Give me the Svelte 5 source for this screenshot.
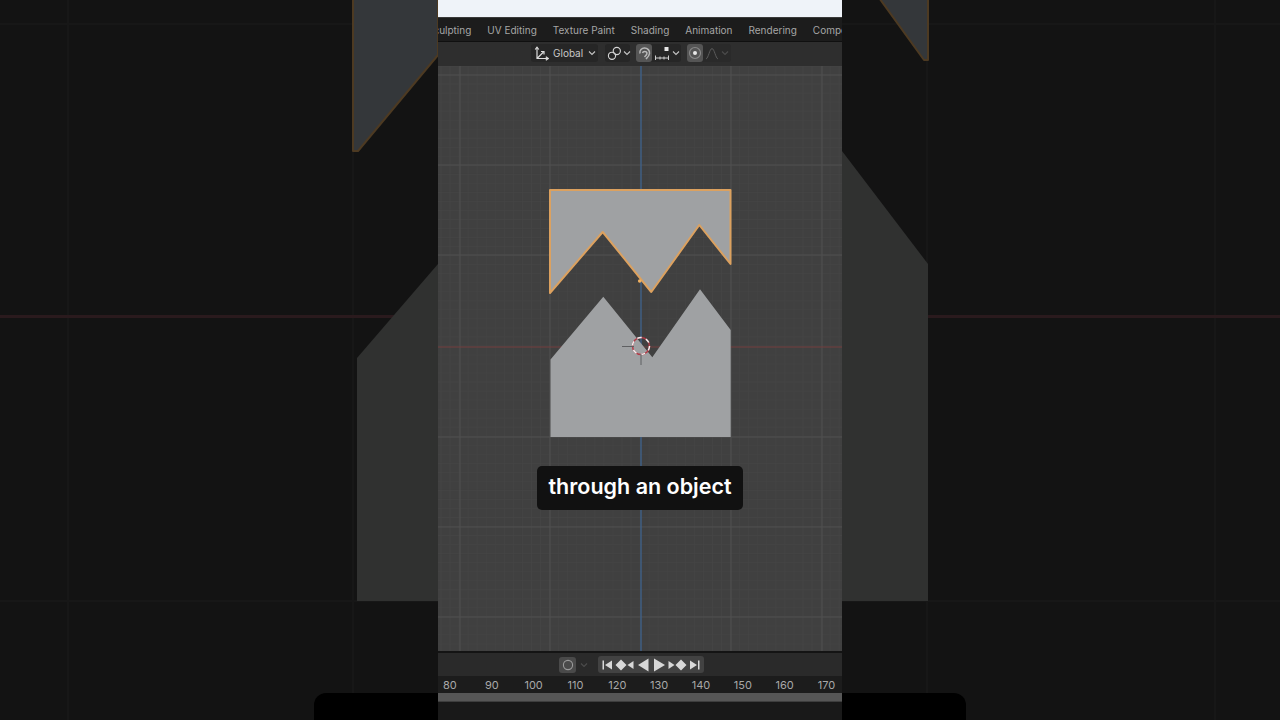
<script lang="ts">
	const tabs = ['Sculpting', 'UV Editing', 'Texture Paint', 'Shading', 'Animation', 'Rendering', 'Compositing'];
	const frames = [80, 90, 100, 110, 120, 130, 140, 150, 160, 170];

	const majorX = [460, 550, 731, 822];
	const majorY = [75, 165, 255, 437, 527, 617];
	const minorX = Array.from({ length: 46 }, (_, i) => 441 + i * 9.05);
	const minorY = Array.from({ length: 66 }, (_, i) => 66 + i * 9.03);
</script>

<div class="stage">
	<svg class="backdrop" viewBox="0 0 1280 720" aria-hidden="true">
		<g class="back-grid">
			<line x1="68" y1="0" x2="68" y2="720" />
			<line x1="353" y1="0" x2="353" y2="720" />
			<line x1="927" y1="0" x2="927" y2="720" />
			<line x1="1215" y1="0" x2="1215" y2="720" />
			<line x1="0" y1="24" x2="1280" y2="24" />
			<line x1="0" y1="601" x2="1280" y2="601" />
		</g>
		<line class="back-axis" x1="0" y1="316.5" x2="400" y2="316.5" />
		<line class="back-axis" x1="928" y1="316.5" x2="1280" y2="316.5" />
		<polygon class="back-top" points="353,-5 438,-5 438,55 358,151 353,151" />
		<polygon class="back-top" points="877,-5 928,-5 928,60 924,60" />
		<polygon class="back-low" points="357,358 438,264 438,601 357,601" />
		<polygon class="back-low" points="842,151 928,264 928,601 842,601" />
		<rect x="314" y="693" width="652" height="60" rx="12" fill="#000" />
	</svg>

	<main class="screen">
		<div class="strip"></div>

		<nav class="tabs">
			{#each tabs as tab}
				<span>{tab}</span>
			{/each}
		</nav>

		<div class="tool-header">
			<div class="group orient">
				<svg width="15" height="15" viewBox="0 0 15 15" fill="none" stroke="#dcdcdc" stroke-width="1.2">
					<path d="M3 1.5V12.5H14M3 12.5L9.5 6" />
					<path d="M1.2 3.5L3 1.2L4.8 3.5M11.8 10.7L14.2 12.5L11.8 14.3M7 5.5L10 5.5L10 8.5" />
				</svg>
				<span class="label">Global</span>
				<svg class="chev" width="8" height="6" viewBox="0 0 8 6"><path d="M1 1.5L4 4.5L7 1.5" /></svg>
			</div>
			<div class="group pivot">
				<svg width="15" height="15" viewBox="0 0 15 15" fill="none" stroke="#d6d6d6" stroke-width="1.1">
					<circle cx="5" cy="9.8" r="3.6" />
					<circle cx="9.8" cy="5" r="3.6" />
				</svg>
				<svg class="chev" width="8" height="6" viewBox="0 0 8 6"><path d="M1 1.5L4 4.5L7 1.5" /></svg>
			</div>
			<div class="group snap">
				<span class="active-btn">
					<svg width="13" height="13" viewBox="0 0 13 13" fill="none" stroke="#b9b9b9" stroke-width="1.5">
						<path d="M2 6.5C1.2 3 4 1 6.5 1C9.5 1 12 3.5 11.5 6.5C11.2 9 9.5 10.5 8 12" />
						<path d="M4.5 6C5 4 8.5 3.8 9 6C9.2 7.5 8 8.5 6.5 10" />
					</svg>
				</span>
				<svg width="16" height="15" viewBox="0 0 16 15" fill="none" stroke="#cfcfcf" stroke-width="1">
					<path d="M1.5 9.5V14M6 10.5V13.5M10 10.5V13.5M14.5 9.5V14M1.5 12H14.5" />
					<rect x="10.5" y="1" width="4" height="4" fill="#e8e8e8" stroke="none" />
				</svg>
				<svg class="chev" width="8" height="6" viewBox="0 0 8 6"><path d="M1 1.5L4 4.5L7 1.5" /></svg>
			</div>
			<div class="group prop">
				<span class="active-btn">
					<svg width="14" height="14" viewBox="0 0 14 14" fill="none">
						<circle cx="7" cy="7" r="5.5" stroke="#8a8a8a" stroke-width="1.2" />
						<circle cx="7" cy="7" r="2" fill="#e8e8e8" />
					</svg>
				</span>
				<svg width="14" height="13" viewBox="0 0 14 13" fill="none" stroke="#5c5c5c" stroke-width="1">
					<path d="M1 12C3.5 11 4.5 2 7 1.5C9.5 2 10.5 11 13 12" />
				</svg>
				<svg class="chev dim" width="8" height="6" viewBox="0 0 8 6"><path d="M1 1.5L4 4.5L7 1.5" /></svg>
			</div>
		</div>

		<svg class="viewport" viewBox="438 66 404 585" aria-hidden="true">
			<g class="minor">
				{#each minorX as x}
					<line x1={x} y1="66" x2={x} y2="651" />
				{/each}
				{#each minorY as y}
					<line x1="438" y1={y} x2="842" y2={y} />
				{/each}
			</g>
			<g class="major">
				{#each majorX as x}
					<line x1={x} y1="66" x2={x} y2="651" />
				{/each}
				{#each majorY as y}
					<line x1="438" y1={y} x2="842" y2={y} />
				{/each}
			</g>
			<line class="axis-x" x1="438" y1="347" x2="842" y2="347" />
			<line class="axis-y" x1="641" y1="66" x2="641" y2="651" />

			<polygon class="low-shape" points="550.5,359.5 603.3,296.7 652.3,357.3 700,289.3 730.7,330 730.7,437 550.5,437" />
			<polygon class="top-shape" points="550,190 730.5,190 730.5,264 699.3,225 651.3,292 602.7,232 550,293" />
			<circle cx="639.7" cy="281" r="1.8" fill="#f0b060" />

			<g class="cursor">
				<circle class="ring-red" cx="641" cy="346" r="8.5" />
				<circle class="ring-white" cx="641" cy="346" r="8.5" />
				<path d="M622 346.5H634M641 354V365" />
			</g>
		</svg>

		<div class="timeline">
			<div class="rec">
				<svg width="12" height="12" viewBox="0 0 12 12" fill="none">
					<circle cx="6" cy="6" r="4.6" stroke="#9a9a9a" stroke-width="1.1" />
				</svg>
			</div>
			<svg class="chev dim rec-chev" width="8" height="6" viewBox="0 0 8 6"><path d="M1 1.5L4 4.5L7 1.5" /></svg>
			<div class="transport">
				<svg width="16" height="14" viewBox="0 0 16 14"><path d="M3.5 2.5H5V11.5H3.5ZM13 2.5V11.5L6 7Z" /></svg>
				<svg width="20" height="14" viewBox="0 0 20 14"><path d="M6 1.5L11.5 7L6 12.5L0.5 7ZM18.5 3V11L12.5 7Z" /></svg>
				<svg width="16" height="14" viewBox="0 0 16 14"><path d="M13.5 0.5V13.5L3 7Z" /></svg>
				<svg width="16" height="14" viewBox="0 0 16 14"><path d="M3 0.5V13.5L14 7Z" /></svg>
				<svg width="20" height="14" viewBox="0 0 20 14"><path d="M1.5 3V11L7.5 7ZM14 1.5L19.5 7L14 12.5L8.5 7Z" /></svg>
				<svg width="16" height="14" viewBox="0 0 16 14"><path d="M3 2.5V11.5L10 7ZM11 2.5H12.5V11.5H11Z" /></svg>
			</div>
		</div>

		<div class="ruler">
			{#each frames as frame}
				<span>{frame}</span>
			{/each}
		</div>
		<div class="scrub"></div>
		<div class="footer"></div>

		<div class="caption">through an object</div>
	</main>
</div>

<style>
	:global(body) {
		margin: 0;
		background: #131313;
	}

	.stage {
		position: relative;
		width: 1280px;
		height: 720px;
		display: flex;
		justify-content: center;
		overflow: hidden;
		background: #131313;
		font-family: Inter, "Liberation Sans", sans-serif;
	}

	.backdrop {
		position: absolute;
		inset: 0;
		width: 1280px;
		height: 720px;
	}

	.back-grid line {
		stroke: #171717;
		stroke-width: 2;
	}

	.back-axis {
		stroke: #2a1a1d;
		stroke-width: 3;
	}

	.back-top {
		fill: #34373a;
		stroke: #4d3a22;
		stroke-width: 2;
		stroke-linejoin: round;
	}

	.back-low {
		fill: #303130;
	}

	.screen {
		position: relative;
		width: 404px;
		height: 720px;
		display: flex;
		flex-direction: column;
		overflow: hidden;
		background: #181818;
	}

	.strip {
		height: 17px;
		flex-shrink: 0;
		background: #eff3f9;
		border-bottom: 1px solid #3a3a3a;
	}

	.tabs {
		height: 24px;
		box-sizing: border-box;
		flex-shrink: 0;
		display: flex;
		align-items: center;
		gap: 16px;
		margin-left: -11px;
		width: 460px;
		padding-top: 1px;
		background: #1c1c1c;
		border-bottom: 1px solid #101010;
		font-size: 10px;
		color: #a6a6a6;
		white-space: nowrap;
	}

	.tool-header {
		height: 24px;
		box-sizing: border-box;
		flex-shrink: 0;
		display: flex;
		align-items: center;
		padding-left: 93px;
		padding-bottom: 2px;
		background: #2e2e2e;
	}

	.group {
		display: flex;
		align-items: center;
		height: 18px;
		border-radius: 3px;
		background: #262626;
	}

	.group svg {
		flex-shrink: 0;
	}

	.orient {
		width: 67px;
		padding-left: 3px;
		box-sizing: border-box;
	}

	.label {
		margin-left: 4px;
		font-size: 10px;
		color: #c8c8c8;
	}

	.orient .chev {
		margin-left: 5px;
	}

	.pivot {
		width: 25px;
		margin-left: 7px;
		padding-left: 2px;
		gap: 1px;
		box-sizing: border-box;
	}

	.snap {
		width: 45px;
		margin-left: 6px;
		gap: 2px;
	}

	.prop {
		width: 44px;
		margin-left: 6px;
		gap: 2px;
		background: #2a2a2a;
	}

	.active-btn {
		width: 16px;
		height: 18px;
		flex-shrink: 0;
		display: flex;
		align-items: center;
		justify-content: center;
		border-radius: 3px;
		background: #555;
	}

	.chev {
		flex-shrink: 0;
		fill: none;
		stroke: #c4c4c4;
		stroke-width: 1.1;
	}

	.chev.dim {
		stroke: #4c4c4c;
	}

	.viewport {
		display: block;
		width: 404px;
		height: 585px;
		flex-shrink: 0;
		background: #404040;
	}

	.minor line {
		stroke: #474747;
		stroke-width: 0.6;
	}

	.major line {
		stroke: #505050;
		stroke-width: 1;
	}

	.axis-x {
		stroke: #743e3f;
		stroke-width: 1;
	}

	.axis-y {
		stroke: #3f6188;
		stroke-width: 1.4;
	}

	.low-shape {
		fill: #9fa1a3;
	}

	.top-shape {
		fill: #9fa1a3;
		stroke: #dca15f;
		stroke-width: 2;
		stroke-linejoin: round;
	}

	.cursor {
		fill: none;
	}

	.cursor path {
		stroke: #5f6062;
		stroke-width: 1;
	}

	.ring-red {
		stroke: #b33c48;
		stroke-width: 1.5;
	}

	.ring-white {
		stroke: #f2f2f2;
		stroke-width: 1.5;
		stroke-dasharray: 4.5 4.5;
	}

	.timeline {
		height: 25px;
		flex-shrink: 0;
		display: flex;
		align-items: center;
		padding-left: 121px;
		box-sizing: border-box;
		border-top: 2px solid #141414;
		background: #2a2a2a;
	}

	.rec {
		width: 17px;
		height: 16px;
		display: flex;
		align-items: center;
		justify-content: center;
		border-radius: 3px;
		background: #4a4a4a;
	}

	.rec-chev {
		margin-left: 4px;
	}

	.transport {
		display: flex;
		align-items: center;
		justify-content: space-between;
		width: 106px;
		height: 17px;
		margin-left: 10px;
		padding: 0 1px;
		box-sizing: border-box;
		border-radius: 3px;
		background: #424242;
	}

	.transport svg {
		fill: #d8d8d8;
		flex-shrink: 0;
	}

	.ruler {
		height: 17px;
		flex-shrink: 0;
		display: flex;
		align-items: center;
		margin-left: -9px;
		background: #1c1c1c;
		font-size: 11px;
		color: #a8a8a8;
	}

	.ruler span {
		width: 41.85px;
		flex-shrink: 0;
		text-align: center;
	}

	.scrub {
		height: 9px;
		flex-shrink: 0;
		background: #565656;
		border-bottom: 1px solid #3e3e3e;
		box-sizing: border-box;
	}

	.footer {
		flex: 1;
		background: #191919;
	}

	.caption {
		position: absolute;
		left: 99px;
		top: 466px;
		width: 206px;
		height: 44px;
		box-sizing: border-box;
		padding-bottom: 4px;
		display: flex;
		align-items: center;
		justify-content: center;
		border-radius: 5px;
		background: #111;
		color: #fff;
		font-size: 21.5px;
		font-weight: 600;
		white-space: nowrap;
	}
</style>
